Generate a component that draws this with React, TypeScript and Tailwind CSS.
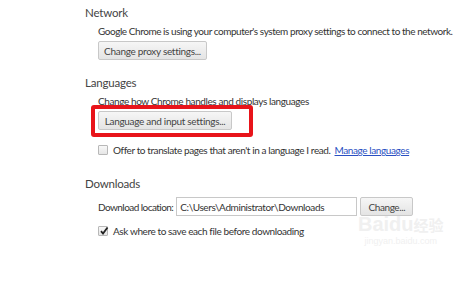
export default function App() {
  return (
    <div className="relative w-[462px] h-[282px] overflow-hidden bg-white pl-[85px] pt-[5px] text-[#333] text-[10px] tracking-[-0.4px] leading-[14px] font-['Lato',sans-serif] whitespace-nowrap">
      {/* Network */}
      <div className="text-[11.5px] tracking-[-0.2px] leading-[15px] text-[#444]">Network</div>
      <div className="pl-[13px] mt-[4px] tracking-[-0.45px]">
        Google Chrome is using your computer's system proxy settings to connect to the network.
      </div>
      <div className="pl-[13px] mt-[3px]">
        <button className="h-[19px] w-[109px] rounded-[2px] border border-[#c8c8c8] bg-gradient-to-b from-[#f6f6f6] to-[#e4e4e4] text-[10px] text-[#444] tracking-[-0.3px]">
          Change proxy settings...
        </button>
      </div>

      {/* Languages */}
      <div className="mt-[15px] text-[11.5px] tracking-[-0.2px] leading-[15px] text-[#444]">Languages</div>
      <div className="pl-[13px] mt-[4px]">Change how Chrome handles and displays languages</div>
      <div className="relative pl-[13px] mt-[3px]">
        <button className="h-[19px] w-[134px] rounded-[2px] border border-[#c8c8c8] bg-gradient-to-b from-[#f6f6f6] to-[#e4e4e4] text-[10px] text-[#444] tracking-[-0.3px]">
          Language and input settings...
        </button>
        <div className="absolute left-[6px] top-[-6px] w-[162px] h-[32px] rounded-[3px] border-[4px] border-[#e8141a]"></div>
      </div>
      <div className="pl-[13px] mt-[13px] flex items-center">
        <span className="w-[10px] h-[10px] rounded-[1px] border border-[#b8b8b8] bg-gradient-to-b from-[#f8f8f8] to-[#e6e6e6]"></span>
        <span className="ml-[5px]">Offer to translate pages that aren't in a language I read.</span>
        <span className="ml-[4px] text-[#2a4fc2] underline">Manage languages</span>
      </div>

      {/* Downloads */}
      <div className="mt-[19px] text-[11.5px] tracking-[-0.2px] leading-[15px] text-[#444]">Downloads</div>
      <div className="pl-[13px] mt-[6px] flex items-center">
        <span className="tracking-[-0.55px]">Download location:</span>
        <div className="ml-[3px] h-[19px] w-[181px] border border-[#c8c8c8] pl-[3px] flex items-center">C:\Users\Administrator\Downloads</div>
        <button className="ml-[3px] h-[19px] w-[53px] rounded-[2px] border border-[#c8c8c8] bg-gradient-to-b from-[#f6f6f6] to-[#e4e4e4] text-[10px] text-[#444]">
          Change...
        </button>
      </div>
      <div className="pl-[13px] mt-[8px] flex items-center">
        <span className="relative w-[10px] h-[10px] rounded-[1px] border border-[#b8b8b8] bg-gradient-to-b from-[#f8f8f8] to-[#e6e6e6]">
          <svg viewBox="0 0 10 10" className="absolute left-[0px] top-[-1px] w-[10px] h-[10px]">
            <path d="M2 5.2 L4 7.5 L8.5 1.5" fill="none" stroke="#222" strokeWidth="1.8" />
          </svg>
        </span>
        <span className="ml-[5px]">Ask where to save each file before downloading</span>
      </div>

      {/* watermark */}
      <div className="absolute left-[358px] top-[213px] flex flex-col items-center text-[#f0f0f0] pointer-events-none tracking-normal">
        <div className="text-[20px] leading-[22px] font-bold font-['Liberation_Sans',sans-serif]">Baidu<span className="text-[15px] font-['Noto_Sans_CJK_SC',sans-serif]">经验</span></div>
        <div className="text-[9px] leading-[11px] font-['Liberation_Sans',sans-serif]">jingyan.baidu.com</div>
      </div>
    </div>
  );
}
